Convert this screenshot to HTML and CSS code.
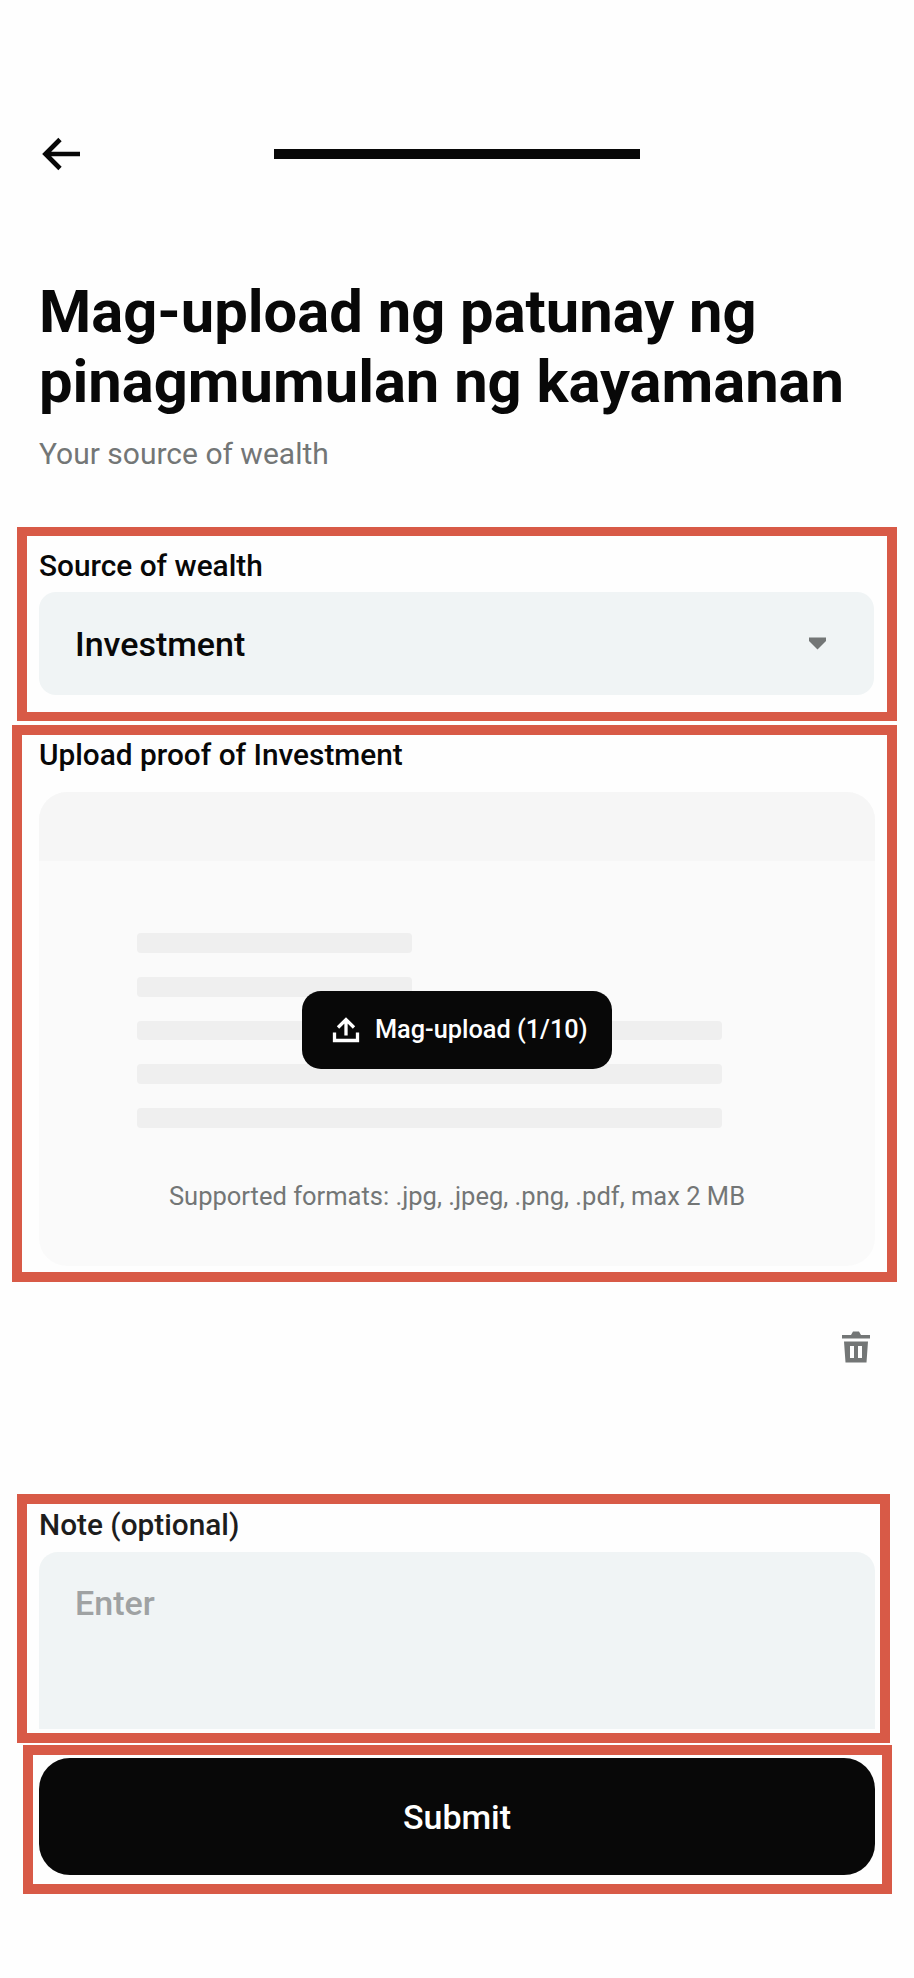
FILE: index.html
```html
<!DOCTYPE html>
<html lang="fil">
<head>
<meta charset="utf-8">
<title>Mag-upload ng patunay</title>
<link rel="stylesheet" href="styles.css">
</head>
<body>
<main class="screen">
  <header class="topbar">
    <svg class="back" viewBox="0 0 40 34" fill="none" stroke="#080808" stroke-width="4.700"><path d="M18.500 2.500L4 17L18.500 31.500M4 17H38.500"/></svg>
    <div class="progress"></div>
  </header>
  <h1 class="title"><span class="line-one">Mag-upload ng patunay ng</span><br><span class="line-two">pinagmumulan ng kayamanan</span></h1>
  <p class="subtitle"><span>Your source of wealth</span></p>

  <section class="frame frame-source">
    <div class="label label-source"><span>Source of wealth</span></div>
    <div class="select">
      <span class="value">Investment</span>
      <svg class="caret" viewBox="0 0 17 13"><path d="M0 0.500H17V4L8.500 12.500L0 4Z" fill="#737676"/></svg>
    </div>
  </section>

  <section class="frame frame-upload">
    <div class="label label-upload"><span>Upload proof of Investment</span></div>
    <div class="dropzone">
      <div class="dropzone-head"></div>
      <div class="skeleton">
        <i class="bar short"></i><i class="bar short"></i><i class="bar"></i><i class="bar"></i><i class="bar"></i>
        <button class="upload">
          <svg class="upload-icon" viewBox="0 0 28 26" fill="none" stroke="#fff" stroke-width="3.300"><path d="M2.500 15.500V23.500H25.500V15.500M14 18.500V3M6 10.500L14 2.500L22 10.500"/></svg>
          <span class="upload-text">Mag-upload (1/10)</span>
        </button>
      </div>
      <p class="formats"><span>Supported formats: .jpg, .jpeg, .png, .pdf, max 2 MB</span></p>
    </div>
  </section>

  <div class="file-row">
    <svg class="trash" viewBox="0 0 28 32"><path fill="#737676" fill-rule="evenodd" d="M0 4H9L11 0.500H17L19 4H28V7.500H0ZM2 10.500H26L24.500 31.500H3.500ZM8 15V27H12V15ZM16 15V27H20V15Z"/></svg>
  </div>

  <section class="frame frame-note">
    <div class="label label-note"><span>Note (optional)</span></div>
    <div class="note"><span class="placeholder">Enter</span></div>
  </section>

  <section class="frame frame-submit">
    <button class="submit"><span>Submit</span></button>
  </section>
</main>
</body>
</html>
```
FILE: styles.css
```css
* { box-sizing: border-box; }
body { margin: 0; background: #fefefe; font-family: Roboto, "Liberation Sans", sans-serif; color: #080808; }
button { border: 0; font: inherit; padding: 0; }
.screen { width: 914px; height: 1978px; display: flex; flex-direction: column; align-items: flex-start; overflow: hidden; }
.topbar { display: flex; align-items: center; height: 34px; margin-top: 137px; padding-left: 41px; }
.back { width: 41px; height: 34px; }
.progress { width: 366px; height: 10px; margin-left: 192px; background: #080808; }
.title { margin: 106px 0 0 39px; font-size: 59.700px; line-height: 70px; font-weight: 700; white-space: nowrap; }
.subtitle { margin: 19px 0 0 39px; font-size: 30px; line-height: 36px; color: #737676; }
.frame { border: 10px solid #d85a47; background: #fefefe; }
.label { font-size: 29.800px; line-height: 36px; font-weight: 500; white-space: nowrap; }

.frame-source { width: 880px; height: 194px; margin: 55px 0 0 17px; border-width: 9px 10px; padding: 12px 13px 0 12px; }
.select { display: flex; align-items: center; justify-content: space-between; height: 103px; margin-top: 8px; padding: 0 48px 0 36px; border-radius: 17px; background: #f0f4f5; }
.value { font-size: 34px; line-height: 40px; font-weight: 500; }
.caret { width: 17px; height: 13px; }

.frame-upload { width: 885px; height: 557px; margin: 4px 0 0 12px; padding: 2px 12px 0 17px; }
.dropzone { height: 474px; margin-top: 19px; border-radius: 28px; background: #fafafa; overflow: hidden; }
.dropzone-head { height: 69px; background: #f6f6f6; }
.skeleton { position: relative; display: flex; flex-direction: column; gap: 24px; width: 585px; margin: 72px 0 0 98px; }
.bar { height: 19.800px; border-radius: 4px; background: #efefef; }
.short { width: 275px; }
.upload { position: absolute; left: 165px; top: 58px; width: 310px; height: 78px; display: flex; align-items: center; padding-left: 30px; gap: 15px; border-radius: 19px; background: #080808; color: #fff; }
.upload-icon { width: 28px; height: 26px; flex: none; }
.upload-text { font-size: 25.300px; line-height: 32px; font-weight: 500; white-space: nowrap; }
.formats { margin: 52px 0 0; text-align: center; font-size: 25.500px; line-height: 32px; color: #737676; white-space: nowrap; }

.file-row { display: flex; justify-content: flex-end; width: 870px; height: 32px; margin-top: 49px; }
.trash { width: 28px; height: 32px; }

.frame-note { width: 873px; height: 249px; margin: 131px 0 0 17px; padding: 3px 5px 0 12px; }
.label-note { color: #1d1d1d; }
.note { height: 177px; margin-top: 9px; padding: 31px 0 0 36px; border-radius: 19px 19px 0 0; background: #f0f4f5; }
.placeholder { display: block; font-size: 34px; line-height: 40px; font-weight: 500; color: #9fa2a3; }

.frame-submit { width: 869px; height: 149px; margin: 2px 0 0 23px; padding: 3px 7px 0 6px; }
.submit { display: block; width: 100%; height: 117px; border-radius: 31px; background: #080808; color: #fff; font-size: 34px; font-weight: 500; }
```
